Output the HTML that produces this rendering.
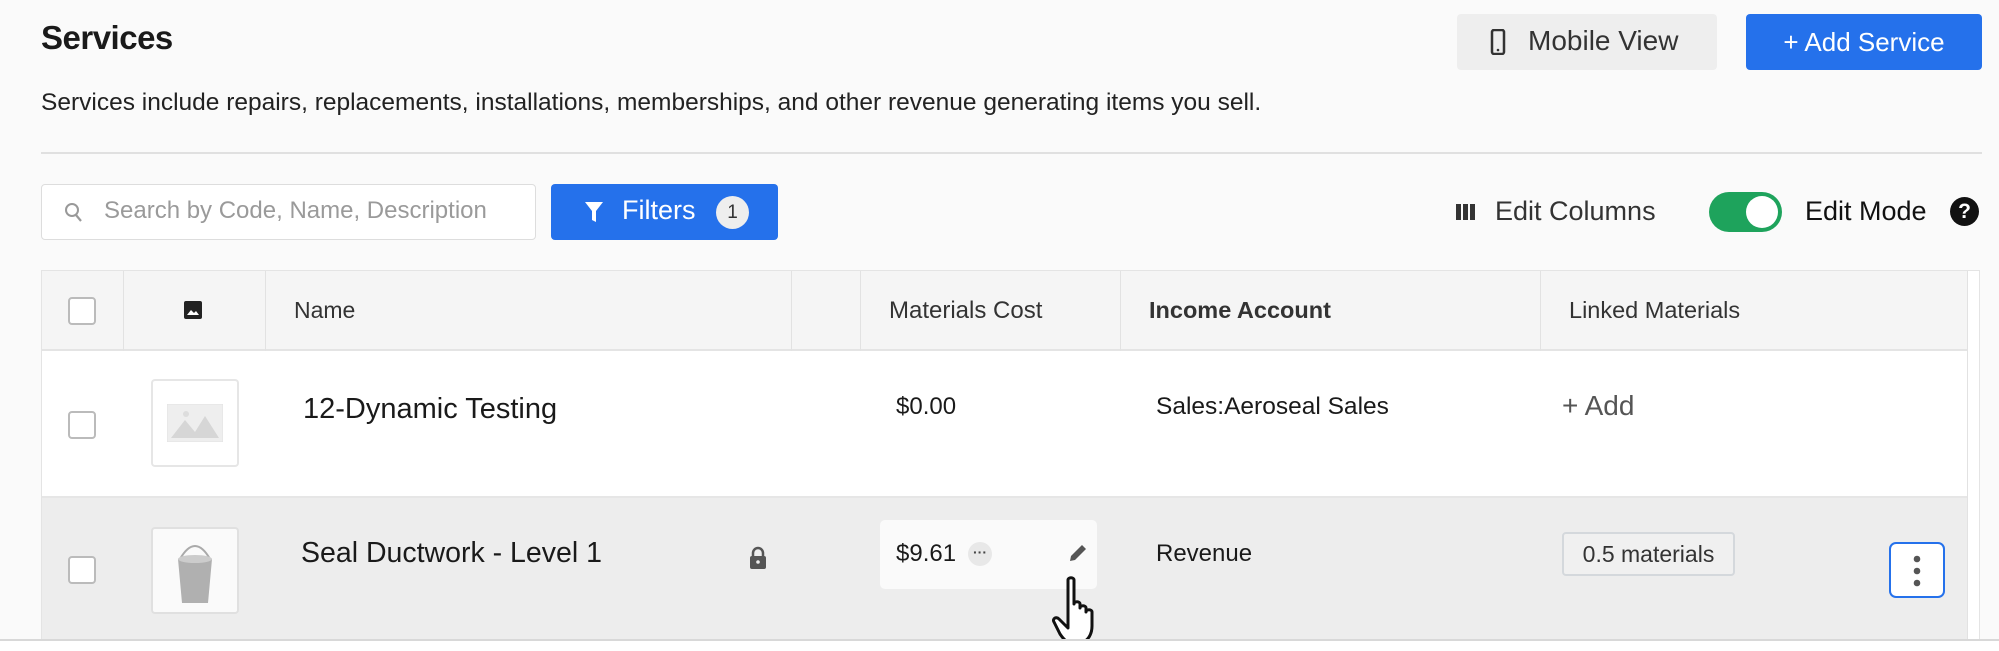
<!DOCTYPE html>
<html><head><meta charset="utf-8"><style>
*{box-sizing:border-box;margin:0;padding:0}
body{width:1999px;height:651px;background:#fafafa;font-family:"Liberation Sans",sans-serif;color:#1a1a1a;position:relative;overflow:hidden}
.a{position:absolute}
.t{white-space:nowrap}
</style></head><body>
<div class="a t" style="left:41px;top:19px;font-size:33px;font-weight:bold;letter-spacing:-0.5px">Services</div>
<div class="a t" style="left:41px;top:89px;font-size:24.5px;color:#222">Services include repairs, replacements, installations, memberships, and other revenue generating items you sell.</div>
<div class="a" style="left:1457px;top:14px;width:260px;height:56px;background:#eeeeee;border-radius:4px"></div>
<svg class="a" style="left:1490px;top:29px" width="16" height="26" viewBox="0 0 16 26"><rect x="2" y="1" width="12" height="24" rx="2" fill="none" stroke="#333" stroke-width="2.5"/><circle cx="8" cy="21" r="1.3" fill="#333"/></svg>
<div class="a t" style="left:1528px;top:25px;font-size:28px;color:#333">Mobile View</div>
<div class="a t" style="left:1746px;top:14px;width:236px;height:56px;background:#2571eb;border-radius:4px;color:#fff;font-size:26px;text-align:center;line-height:56px">+ Add Service</div>
<div class="a" style="left:41px;top:152px;width:1941px;height:2px;background:#e0e0e0"></div>
<div class="a" style="left:41px;top:184px;width:495px;height:56px;background:#fff;border:1px solid #ddd;border-radius:4px"></div>
<svg class="a" style="left:64px;top:202px" width="20" height="22" viewBox="0 0 20 22"><circle cx="8" cy="8" r="6" fill="none" stroke="#999" stroke-width="2"/><path d="M12 13l5 6" stroke="#999" stroke-width="2.2"/></svg>
<div class="a t" style="left:104px;top:197px;font-size:24px;color:#9a9a9a">Search by Code, Name, Description</div>
<div class="a" style="left:551px;top:184px;width:227px;height:56px;background:#2571eb;border-radius:4px"></div>
<svg class="a" style="left:584px;top:200px" width="20" height="24" viewBox="0 0 20 24"><path d="M1 2h18l-7 9v11l-4-2v-9z" fill="#fff"/></svg>
<div class="a t" style="left:622px;top:195px;font-size:27px;color:#fff">Filters</div>
<div class="a t" style="left:716px;top:196px;width:33px;height:33px;border-radius:50%;background:#eee;color:#333;font-size:19px;text-align:center;line-height:33px">1</div>
<svg class="a" style="left:1456px;top:203px" width="20" height="18" viewBox="0 0 20 18"><rect x="0" y="1" width="5" height="16" fill="#333"/><rect x="7" y="1" width="5" height="16" fill="#333"/><rect x="14" y="1" width="5" height="16" fill="#333"/></svg>
<div class="a t" style="left:1495px;top:196px;font-size:27px;color:#333">Edit Columns</div>
<div class="a" style="left:1709px;top:192px;width:73px;height:40px;border-radius:20px;background:#1ea35c"></div>
<div class="a" style="left:1746px;top:196px;width:32px;height:32px;border-radius:50%;background:#fff"></div>
<div class="a t" style="left:1805px;top:196px;font-size:27px;color:#111">Edit Mode</div>
<div class="a t" style="left:1950px;top:197px;width:29px;height:29px;border-radius:50%;background:#111;color:#fff;font-size:21px;font-weight:bold;text-align:center;line-height:29px">?</div>

<div class="a" style="left:41px;top:270px;width:1939px;height:370px;background:#fff;border:1px solid #e4e4e4;border-bottom:none"></div>
<div class="a" style="left:42px;top:271px;width:1926px;height:80px;background:#f5f5f5;border-bottom:2px solid #e4e4e4"></div>
<div class="a" style="left:123px;top:271px;width:1px;height:80px;background:#e2e2e2"></div>
<div class="a" style="left:265px;top:271px;width:1px;height:80px;background:#e2e2e2"></div>
<div class="a" style="left:791px;top:271px;width:1px;height:80px;background:#e2e2e2"></div>
<div class="a" style="left:860px;top:271px;width:1px;height:80px;background:#e2e2e2"></div>
<div class="a" style="left:1120px;top:271px;width:1px;height:80px;background:#e2e2e2"></div>
<div class="a" style="left:1540px;top:271px;width:1px;height:80px;background:#e2e2e2"></div>
<div class="a" style="left:1967px;top:271px;width:1px;height:368px;background:#e2e2e2"></div>
<div class="a" style="left:68px;top:297px;width:28px;height:28px;background:#fff;border:2px solid #bbb;border-radius:4px"></div>
<svg class="a" style="left:183px;top:300px" width="20" height="20" viewBox="0 0 20 20"><rect x="1" y="1" width="18" height="18" rx="2" fill="#222"/><path d="M4 15l4-5 3 3 2-2 3 4z" fill="#fff"/></svg>
<div class="a t" style="left:294px;top:297px;font-size:23px;color:#333">Name</div>
<div class="a t" style="left:889px;top:297px;font-size:24px;color:#333">Materials Cost</div>
<div class="a t" style="left:1149px;top:297px;font-size:23.5px;font-weight:bold;color:#333">Income Account</div>
<div class="a t" style="left:1569px;top:297px;font-size:23.5px;color:#333">Linked Materials</div>

<div class="a" style="left:68px;top:411px;width:28px;height:28px;background:#fff;border:2px solid #bbb;border-radius:4px"></div>
<div class="a" style="left:151px;top:379px;width:88px;height:88px;border:2px solid #e6e6e6;border-radius:4px;background:#fff"></div>
<svg class="a" style="left:167px;top:404px" width="56" height="38" viewBox="0 0 56 38"><rect x="0" y="0" width="56" height="38" fill="#eee" stroke="#e2e2e2"/><path d="M4 34l14-18 10 12 10-16 14 22z" fill="#d6d6d6"/><circle cx="19" cy="10" r="3" fill="#ddd"/></svg>
<div class="a t" style="left:303px;top:393px;font-size:29px">12-Dynamic Testing</div>
<div class="a t" style="left:896px;top:393px;font-size:24px">$0.00</div>
<div class="a t" style="left:1156px;top:393px;font-size:24.5px">Sales:Aeroseal Sales</div>
<div class="a t" style="left:1562px;top:390px;font-size:28px;color:#555">+ Add</div>
<div class="a" style="left:42px;top:496px;width:1925px;height:2px;background:#e6e6e6"></div>

<div class="a" style="left:42px;top:498px;width:1925px;height:141px;background:#ededed"></div>
<div class="a" style="left:68px;top:556px;width:28px;height:28px;background:#fff;border:2px solid #bbb;border-radius:4px"></div>
<div class="a" style="left:151px;top:527px;width:88px;height:87px;border:2px solid #e0e0e0;border-radius:4px;background:#fafafa"></div>
<svg class="a" style="left:166px;top:533px" width="58" height="75" viewBox="0 0 58 75"><path d="M14 26 Q29 0 44 26" fill="none" stroke="#aaa" stroke-width="2"/><path d="M12 26h34l-4 44H16z" fill="#b0b0b0"/><ellipse cx="29" cy="26" rx="17" ry="4" fill="#ccc"/></svg>
<div class="a t" style="left:301px;top:537px;font-size:28.5px">Seal Ductwork - Level 1</div>
<svg class="a" style="left:748px;top:546px" width="20" height="23" viewBox="0 0 20 23"><path d="M5 10V7a5 5 0 0110 0v3" fill="none" stroke="#555" stroke-width="2.5"/><rect x="2" y="10" width="16" height="13" rx="2" fill="#555"/><circle cx="10" cy="16" r="1.8" fill="#ededed"/></svg>
<div class="a" style="left:880px;top:520px;width:217px;height:69px;background:#fafafa;border-radius:5px"></div>
<div class="a t" style="left:896px;top:540px;font-size:24px">$9.61</div>
<div class="a t" style="left:968px;top:542px;width:24px;height:24px;border-radius:50%;background:#e8e8e8;font-size:14px;text-align:center;line-height:20px;font-weight:bold;color:#444">···</div>
<svg class="a" style="left:1068px;top:543px" width="20" height="20" viewBox="0 0 20 20"><path d="M2 18l1-5L14 2l4 4L7 17z" fill="#555"/></svg>
<div class="a t" style="left:1156px;top:540px;font-size:24px">Revenue</div>
<div class="a t" style="left:1562px;top:532px;width:173px;height:44px;border:2px solid #d4d8dc;border-radius:4px;background:#f0f0f0;font-size:23px;color:#333;text-align:center;line-height:40px">0.5 materials</div>
<div class="a" style="left:1889px;top:542px;width:56px;height:56px;border:2px solid #2571eb;border-radius:7px;background:#fff"></div>
<svg class="a" style="left:1911px;top:555px" width="12" height="32" viewBox="0 0 12 32"><circle cx="6" cy="4" r="3.3" fill="#555"/><circle cx="6" cy="16" r="3.3" fill="#555"/><circle cx="6" cy="28" r="3.3" fill="#555"/></svg>
<svg class="a" style="left:1050px;top:576px" width="56" height="72" viewBox="0 0 56 72"><path d="M18 4c0-3 6-3 6 0v24c0-3 6-3 6 0v4c0-3 6-3 6 0v4c0-3 6-3 6 0v14c0 10-6 18-16 18-8 0-12-4-16-10L4 46c-2-3 2-6 5-3l9 9z" fill="#fff" stroke="#111" stroke-width="3" stroke-linejoin="round"/></svg>
<div class="a" style="left:0;top:639px;width:1999px;height:2px;background:#d8d8d8"></div>
<div class="a" style="left:0;top:641px;width:1999px;height:10px;background:#fff"></div>
</body></html>
